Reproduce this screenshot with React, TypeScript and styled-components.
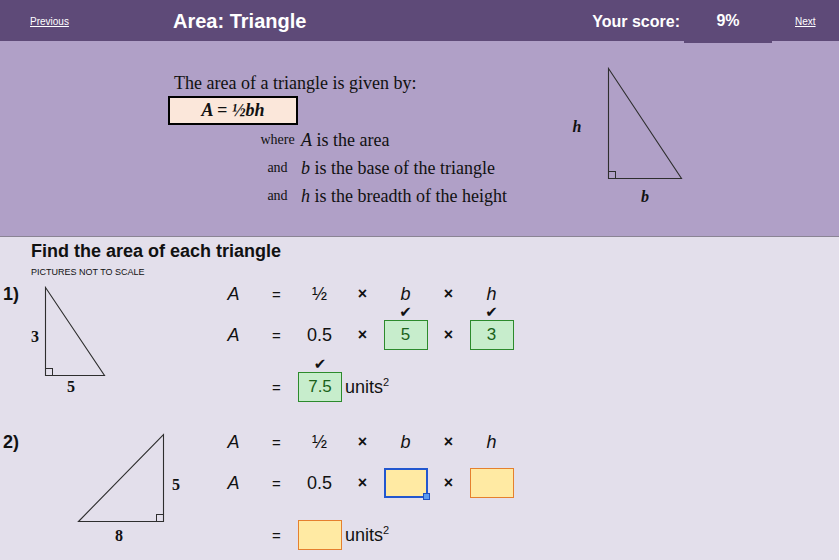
import React from 'react'
import styled, { createGlobalStyle } from 'styled-components'

const GlobalStyle = createGlobalStyle`
  body {
    margin: 0;
    background: #e3dfeb;
    font-family: "Liberation Sans", Arial, sans-serif;
    color: #111;
  }
`

const Header = styled.header`
  position: relative;
  z-index: 1;
  display: grid;
  grid-template-columns: 173px 1fr auto 88px 67px;
  align-items: center;
  height: 41px;
  background: #5e4a78;
  color: #fff;
`

const NavLink = styled.a<{ $pad: number }>`
  padding-left: ${(p) => p.$pad}px;
  font-size: 10px;
  color: #fff;
  text-decoration: underline;
  cursor: pointer;
`

const Title = styled.h1`
  margin: 0;
  font-size: 20px;
  font-weight: bold;
`

const ScoreLabel = styled.span`
  margin-right: 4px;
  font-size: 16px;
  font-weight: bold;
`

const ScoreBox = styled.div`
  align-self: start;
  height: 43px;
  display: flex;
  align-items: center;
  justify-content: center;
  padding-bottom: 2px;
  box-sizing: border-box;
  background: #5e4a78;
  font-size: 16px;
  font-weight: bold;
`

const Panel = styled.section`
  display: flex;
  align-items: flex-start;
  height: 196px;
  box-sizing: border-box;
  padding-left: 168px;
  background: #b0a0c7;
  border-bottom: 1px solid #8a8494;
  font-family: "Liberation Serif", "Times New Roman", serif;
`

const TextBlock = styled.div`
  width: 397px;
  padding-top: 31px;
`

const Intro = styled.p`
  margin: 0;
  padding-left: 6px;
  font-size: 18px;
  line-height: 22px;
`

const FormulaBox = styled.div`
  width: 130px;
  height: 29px;
  margin-top: 2px;
  box-sizing: border-box;
  display: flex;
  align-items: center;
  justify-content: center;
  border: 2px solid #000;
  background: #fbe7da;
  font-size: 18px;
  font-weight: bold;
  font-style: italic;
`

const Defs = styled.div`
  display: grid;
  grid-template-columns: 45px auto;
  grid-auto-rows: 28px;
  column-gap: 1px;
  align-items: center;
  margin: 1px 0 0 87px;
`

const DefLabel = styled.span`
  font-size: 14px;
  text-align: center;
`

const DefText = styled.span`
  font-size: 18px;
`

const FigureSvg = styled.svg<{ $top?: number }>`
  display: block;
  flex: none;
  margin-top: ${(p) => p.$top ?? 0}px;
  overflow: visible;
`

const Main = styled.main`
  padding-top: 3px;
`

const Heading = styled.h2`
  margin: 0 0 0 31px;
  font-size: 18px;
  line-height: 22px;
  font-weight: bold;
`

const Note = styled.p`
  margin: 4px 0 0 31px;
  font-size: 9px;
  line-height: 12px;
`

const ProblemRow = styled.div<{ $gap: number }>`
  display: flex;
  align-items: flex-start;
  margin-top: ${(p) => p.$gap}px;
`

const Num = styled.div`
  width: 25px;
  flex: none;
  box-sizing: border-box;
  padding-left: 3px;
  font-size: 18px;
  font-weight: bold;
  line-height: 24px;
`

const Equation = styled.div`
  display: grid;
  grid-template-columns: repeat(7, 43px);
  grid-template-rows: 24px 44px 52px;
  align-items: end;
  justify-items: center;
  font-size: 18px;
`

const Sym = styled.span<{ $col?: string; $size?: number; $bold?: boolean; $italic?: boolean }>`
  grid-column: ${(p) => p.$col ?? 'auto'};
  height: 30px;
  display: flex;
  align-items: center;
  font-size: ${(p) => p.$size ?? 18}px;
  font-weight: ${(p) => (p.$bold ? 'bold' : 'normal')};
  font-style: ${(p) => (p.$italic ? 'italic' : 'normal')};
`

const HeadSym = styled(Sym)`
  height: 24px;
`

const Slot = styled.div<{ $col?: string }>`
  grid-column: ${(p) => p.$col ?? 'auto'};
  display: flex;
  align-items: flex-end;
  justify-self: ${(p) => (p.$col ? 'start' : 'center')};
`

const BoxStack = styled.div`
  display: flex;
  flex-direction: column;
  align-items: center;
`

const Check = styled.span`
  font-family: "DejaVu Sans", sans-serif;
  font-size: 15px;
  line-height: 14px;
  height: 14px;
  margin-bottom: 1px;
`

type BoxState = 'correct' | 'empty' | 'focus'

const boxBorder: Record<BoxState, string> = {
  correct: '1px solid #2c8a2c',
  empty: '1px solid #e5802e',
  focus: '2px solid #2257cf',
}

const AnswerBox = styled.div<{ $state: BoxState }>`
  position: relative;
  width: 44px;
  height: 30px;
  box-sizing: border-box;
  display: flex;
  align-items: center;
  justify-content: center;
  border: ${(p) => boxBorder[p.$state]};
  background: ${(p) => (p.$state === 'correct' ? '#c7edcc' : '#ffeaa3')};
  color: #1a621a;
  font-size: 17px;
`

const Handle = styled.span`
  position: absolute;
  right: -4px;
  bottom: -4px;
  width: 5px;
  height: 5px;
  background: #5a9af0;
  border: 1px solid #1e50c0;
`

const Units = styled.span`
  margin-left: 3px;
  line-height: 30px;
  font-size: 18px;
  sup {
    font-size: 11px;
    vertical-align: 7px;
    line-height: 0;
  }
`

type Label = { text: string; x: number; y: number; italic?: boolean }

const Triangle: React.FC<{
  width: number
  height: number
  top?: number
  points: string
  square: [number, number]
  labels: Label[]
}> = ({ width, height, top, points, square, labels }) => (
  <FigureSvg width={width} height={height} $top={top}>
    <polygon points={points} fill="none" stroke="#2e2e2e" strokeWidth={1.1} />
    <rect x={square[0]} y={square[1]} width={7} height={7} fill="none" stroke="#2e2e2e" strokeWidth={1} />
    {labels.map((l) => (
      <text
        key={l.text}
        x={l.x}
        y={l.y}
        textAnchor="middle"
        fontFamily='"Liberation Serif", "Times New Roman", serif'
        fontWeight="bold"
        fontStyle={l.italic ? 'italic' : 'normal'}
        fontSize={16}
        fill="#111"
      >
        {l.text}
      </text>
    ))}
  </FigureSvg>
)

const Box: React.FC<{ state: BoxState; value?: string; checked?: boolean }> = ({ state, value, checked }) => (
  <BoxStack>
    {checked && <Check>✔</Check>}
    <AnswerBox $state={state}>
      {value}
      {state === 'focus' && <Handle />}
    </AnswerBox>
  </BoxStack>
)

const Times = () => (
  <Sym $size={16} $bold>
    ×
  </Sym>
)

const Equals = () => <Sym $size={15}>=</Sym>

const FirstLine = () => (
  <>
    <HeadSym $italic>A</HeadSym>
    <HeadSym $size={15}>=</HeadSym>
    <HeadSym>½</HeadSym>
    <HeadSym $size={16} $bold>
      ×
    </HeadSym>
    <HeadSym $italic>b</HeadSym>
    <HeadSym $size={16} $bold>
      ×
    </HeadSym>
    <HeadSym $italic>h</HeadSym>
  </>
)

const App: React.FC = () => {
  return (
    <>
      <GlobalStyle />
      <Header>
        <NavLink $pad={30}>Previous</NavLink>
        <Title>Area: Triangle</Title>
        <ScoreLabel>Your score:</ScoreLabel>
        <ScoreBox>9%</ScoreBox>
        <NavLink $pad={23}>Next</NavLink>
      </Header>

      <Panel>
        <TextBlock>
          <Intro>The area of a triangle is given by:</Intro>
          <FormulaBox>A = ½bh</FormulaBox>
          <Defs>
            <DefLabel>where</DefLabel>
            <DefText>
              <i>A</i> is the area
            </DefText>
            <DefLabel>and</DefLabel>
            <DefText>
              <i>b</i> is the base of the triangle
            </DefText>
            <DefLabel>and</DefLabel>
            <DefText>
              <i>h</i> is the breadth of the height
            </DefText>
          </Defs>
        </TextBlock>
        <Triangle
          width={130}
          height={150}
          top={14}
          points="43.5,13.5 43.5,123.5 116.5,123.5"
          square={[43.5, 116.5]}
          labels={[
            { text: 'h', x: 12, y: 77, italic: true },
            { text: 'b', x: 80, y: 147, italic: true },
          ]}
        />
      </Panel>

      <Main>
        <Heading>Find the area of each triangle</Heading>
        <Note>PICTURES NOT TO SCALE</Note>

        <ProblemRow $gap={4}>
          <Num>1)</Num>
          <Triangle
            width={187}
            height={120}
            points="20.5,5.5 20.5,93.5 79.5,93.5"
            square={[20.5, 86.5]}
            labels={[
              { text: '3', x: 10, y: 60 },
              { text: '5', x: 46, y: 110 },
            ]}
          />
          <Equation>
            <FirstLine />
            <Sym $italic>A</Sym>
            <Equals />
            <Sym>0.5</Sym>
            <Times />
            <Box state="correct" value="5" checked />
            <Times />
            <Box state="correct" value="3" checked />
            <Sym $col="2" $size={15}>
              =
            </Sym>
            <Slot $col="3 / span 3">
              <Box state="correct" value="7.5" checked />
              <Units>
                units<sup>2</sup>
              </Units>
            </Slot>
          </Equation>
        </ProblemRow>

        <ProblemRow $gap={28}>
          <Num>2)</Num>
          <Triangle
            width={187}
            height={120}
            points="53.5,91.5 138.5,4.5 138.5,91.5"
            square={[131.5, 84.5]}
            labels={[
              { text: '5', x: 151, y: 60 },
              { text: '8', x: 94, y: 111 },
            ]}
          />
          <Equation>
            <FirstLine />
            <Sym $italic>A</Sym>
            <Equals />
            <Sym>0.5</Sym>
            <Times />
            <Box state="focus" />
            <Times />
            <Box state="empty" />
            <Sym $col="2" $size={15}>
              =
            </Sym>
            <Slot $col="3 / span 3">
              <Box state="empty" />
              <Units>
                units<sup>2</sup>
              </Units>
            </Slot>
          </Equation>
        </ProblemRow>
      </Main>
    </>
  )
}

export default App
